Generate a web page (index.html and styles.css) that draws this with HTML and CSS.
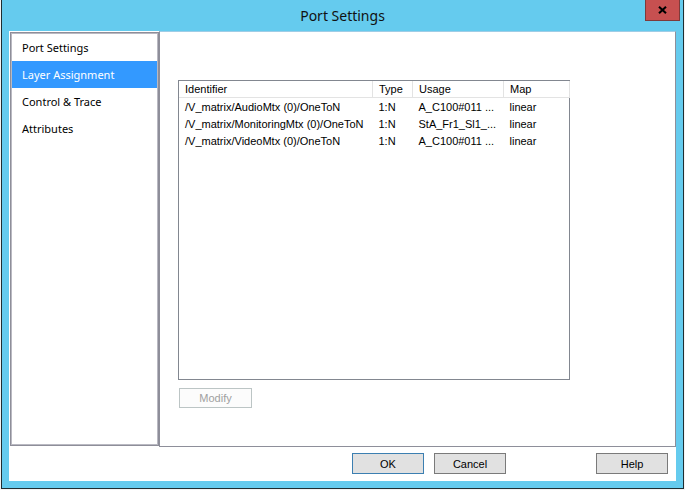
FILE: index.html
```html
<!DOCTYPE html>
<html lang="en">
<head>
    <meta charset="UTF-8">
    <title>Port Settings</title>
    <link rel="stylesheet" href="styles.css">
</head>
<body>
    <div class="window">
        <div class="title-bar">
            <span></span>
            <span class="title">Port Settings</span>
            <button class="close-btn" type="button" aria-label="Close">
                <svg width="9" height="8" viewBox="0 0 9 8"><path d="M1 0.8 L8 7.2 M8 0.8 L1 7.2" stroke="#000" stroke-width="2.1" fill="none"/></svg>
            </button>
        </div>
        <div class="client">
            <div class="main-row">
                <ul class="nav">
                    <li class="nav-item">Port Settings</li>
                    <li class="nav-item selected">Layer Assignment</li>
                    <li class="nav-item">Control &amp; Trace</li>
                    <li class="nav-item">Attributes</li>
                </ul>
                <div class="page">
                    <div class="list-view">
                        <table class="layers">
                            <thead>
                                <tr>
                                    <th class="col-id">Identifier</th>
                                    <th class="col-type">Type</th>
                                    <th class="col-usage">Usage</th>
                                    <th class="col-map">Map</th>
                                </tr>
                            </thead>
                            <tbody>
                                <tr>
                                    <td>/V_matrix/AudioMtx (0)/OneToN</td>
                                    <td>1:N</td>
                                    <td>A_C100#011 ...</td>
                                    <td>linear</td>
                                </tr>
                                <tr>
                                    <td>/V_matrix/MonitoringMtx (0)/OneToN</td>
                                    <td>1:N</td>
                                    <td>StA_Fr1_Sl1_...</td>
                                    <td>linear</td>
                                </tr>
                                <tr>
                                    <td>/V_matrix/VideoMtx (0)/OneToN</td>
                                    <td>1:N</td>
                                    <td>A_C100#011 ...</td>
                                    <td>linear</td>
                                </tr>
                            </tbody>
                        </table>
                    </div>
                    <button class="button modify" type="button" disabled>Modify</button>
                </div>
            </div>
            <div class="button-bar">
                <button class="button default" type="button">OK</button>
                <button class="button cancel" type="button">Cancel</button>
                <button class="button" type="button">Help</button>
            </div>
        </div>
    </div>
</body>
</html>
```

FILE: styles.css
```css
/* Port Settings dialog */

body {
    margin: 0;
    background-color: #f3f3f3;
    font-family: "Liberation Sans", Arial, sans-serif;
    font-size: 11px;
    color: #000;
}

.window {
    width: 681px;
    height: 488px;
    margin-left: 1px;
    background-color: #65cbee;
    border: 1px solid #1e2d31;
    border-top: none;
    display: flex;
    flex-direction: column;
}

.title-bar {
    height: 31px;
    display: grid;
    grid-template-columns: 1fr auto 1fr;
    align-items: start;
}

.title {
    font-family: "Noto Sans", sans-serif;
    font-size: 14px;
    line-height: 31px;
    color: #111;
}

.close-btn {
    justify-self: end;
    width: 35px;
    height: 21px;
    margin-right: 3px;
    padding: 0;
    border: 1px solid #7e3a3a;
    border-top: none;
    background-color: #c75050;
    display: flex;
    align-items: center;
    justify-content: center;
}

.client {
    flex: 1;
    margin: 0 7px 7px 7px;
    background-color: white;
    display: flex;
    flex-direction: column;
}

.main-row {
    display: flex;
    padding-left: 1px;
    height: 416px;
}

.nav {
    list-style: none;
    margin: 1px 0 0 0;
    padding: 1px;
    width: 145px;
    height: 410px;
    border: 1px solid #8e8e99;
    box-shadow: inset 0 0 0 1px #b9b9c2;
    font-family: "Noto Sans", sans-serif;
    font-size: 11px;
}

.nav-item {
    height: 27px;
    line-height: 27px;
    padding-left: 10px;
    color: #000;
}

.nav-item.selected {
    background-color: #3399ff;
    color: white;
}

.page {
    flex: 1;
    border: 1px solid #8e8f9a;
    border-top-color: #9fcde6;
    padding: 48px 0 0 18px;
}

.list-view {
    width: 390px;
    height: 298px;
    border: 1px solid #828790;
}

.layers {
    border-collapse: collapse;
    table-layout: fixed;
    width: 388px;
}

.layers th {
    height: 16px;
    font-weight: normal;
    text-align: left;
    padding: 0 0 0 6px;
    border-right: 1px solid #e3e3e3;
    border-bottom: 1px solid #e3e3e3;
}

.layers td {
    height: 17px;
    padding: 0 0 0 6px;
    white-space: nowrap;
}

.col-id { width: 187px; }
.col-type { width: 33px; }
.col-usage { width: 84px; }
.col-map { width: 59px; }

.button {
    width: 72px;
    height: 21px;
    padding: 0;
    font-family: "Liberation Sans", Arial, sans-serif;
    font-size: 11px;
    color: #000;
    background-color: #e1e1e1;
    border: 1px solid #7a7a7a;
}

.button.default {
    border-color: #3c7fb1;
}

.button.modify {
    display: block;
    margin: 8px 0 0 1px;
    width: 73px;
    height: 20px;
    background-color: #fcfcfc;
    border-color: #bcc5c5;
    color: #a0a0a0;
}

.button-bar {
    display: flex;
    justify-content: flex-end;
    padding: 6px 8px 0 0;
    gap: 10px;
}

.button.cancel {
    margin-right: 80px;
}
```
